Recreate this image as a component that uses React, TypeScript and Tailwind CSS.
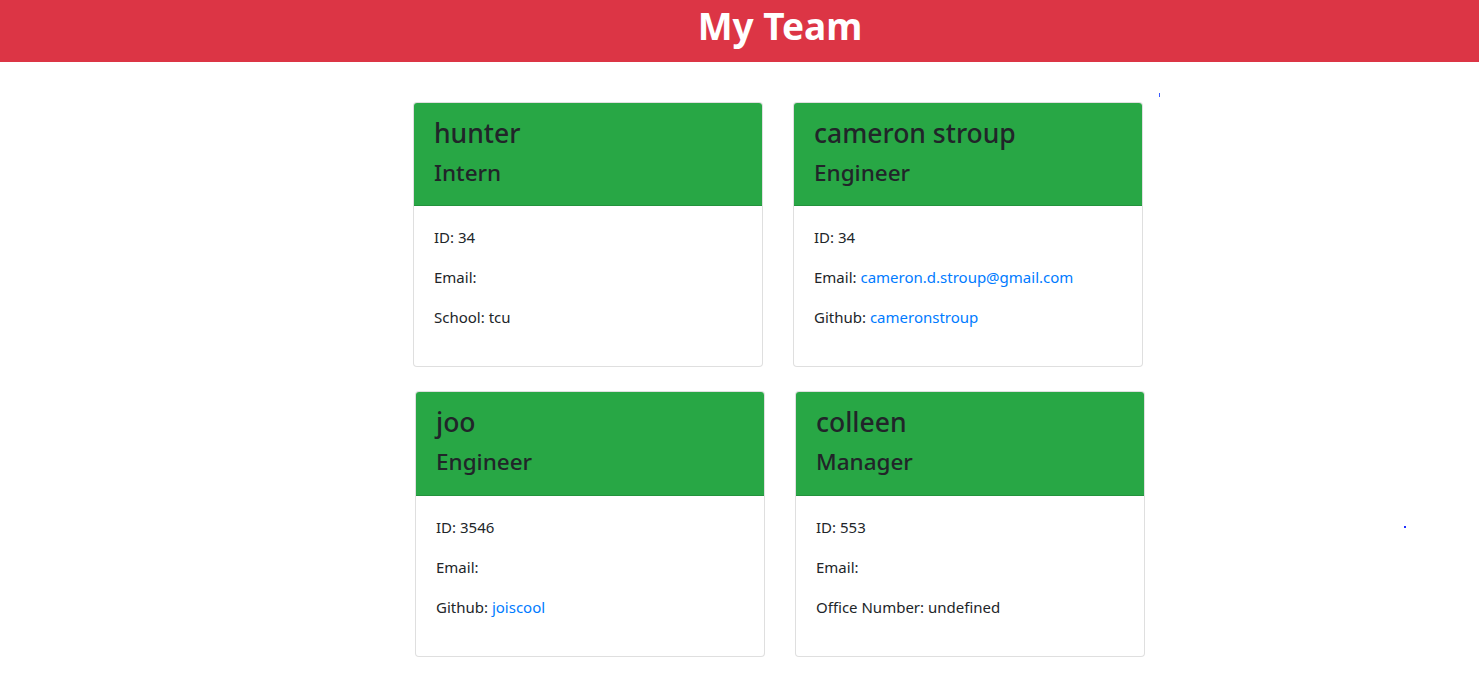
const team = [
  [
    { name: "hunter", role: "Intern", id: "34", email: "", extraLabel: "School", extra: "tcu", link: false },
    {
      name: "cameron stroup",
      role: "Engineer",
      id: "34",
      email: "cameron.d.stroup@gmail.com",
      extraLabel: "Github",
      extra: "cameronstroup",
      link: true,
    },
  ],
  [
    { name: "joo", role: "Engineer", id: "3546", email: "", extraLabel: "Github", extra: "joiscool", link: true },
    { name: "colleen", role: "Manager", id: "553", email: "", extraLabel: "Office Number", extra: "undefined", link: false },
  ],
];

type Member = (typeof team)[number][number];

function Card({ m }: { m: Member }) {
  return (
    <div className="w-[350px] rounded border border-black/[0.125] bg-white overflow-hidden">
      <div className="bg-[#28a745] px-5 pt-[14px] pb-[10px] border-b border-black/[0.125]">
        <h3 className="text-[26.5px] leading-[33.6px] font-medium mb-2">{m.name}</h3>
        <h4 className="text-[22.5px] leading-[28.8px] font-medium mb-2">{m.role}</h4>
      </div>
      <div className="px-5 pt-[19px] pb-[21px] text-[15px] leading-6">
        <p className="mb-4">ID: {m.id}</p>
        <p className="mb-4">
          Email:{" "}
          {m.email && (
            <a href={`mailto:${m.email}`} className="text-[#007bff]">
              {m.email}
            </a>
          )}
        </p>
        <p className="mb-4">
          {m.extraLabel}:{" "}
          {m.link ? <a className="text-[#007bff]">{m.extra}</a> : m.extra}
        </p>
      </div>
    </div>
  );
}

export default function App() {
  return (
    <div className="relative min-h-screen bg-white text-[#212529] font-['Noto_Sans',sans-serif]">
      {/* Header */}
      <header className="h-[62px] bg-[#dc3545] flex items-center justify-center pl-[81px]">
        <h1 className="text-white text-[37px] font-bold leading-none -mt-[12px]">My Team</h1>
      </header>

      {/* Cards */}
      <main className="pt-10">
        <div className="flex gap-[30px] ml-[413px]">
          {team[0].map((m) => (
            <Card key={m.name} m={m} />
          ))}
        </div>
        <div className="flex gap-[30px] ml-[415px] mt-[24px]">
          {team[1].map((m) => (
            <Card key={m.name} m={m} />
          ))}
        </div>
      </main>

      <span className="absolute left-[1159px] top-[93px] h-[4px] w-px bg-[#3b5bff]" />
      <span className="absolute left-[1404px] top-[526px] h-[2px] w-[2px] bg-[#1f2fff]" />
    </div>
  );
}
